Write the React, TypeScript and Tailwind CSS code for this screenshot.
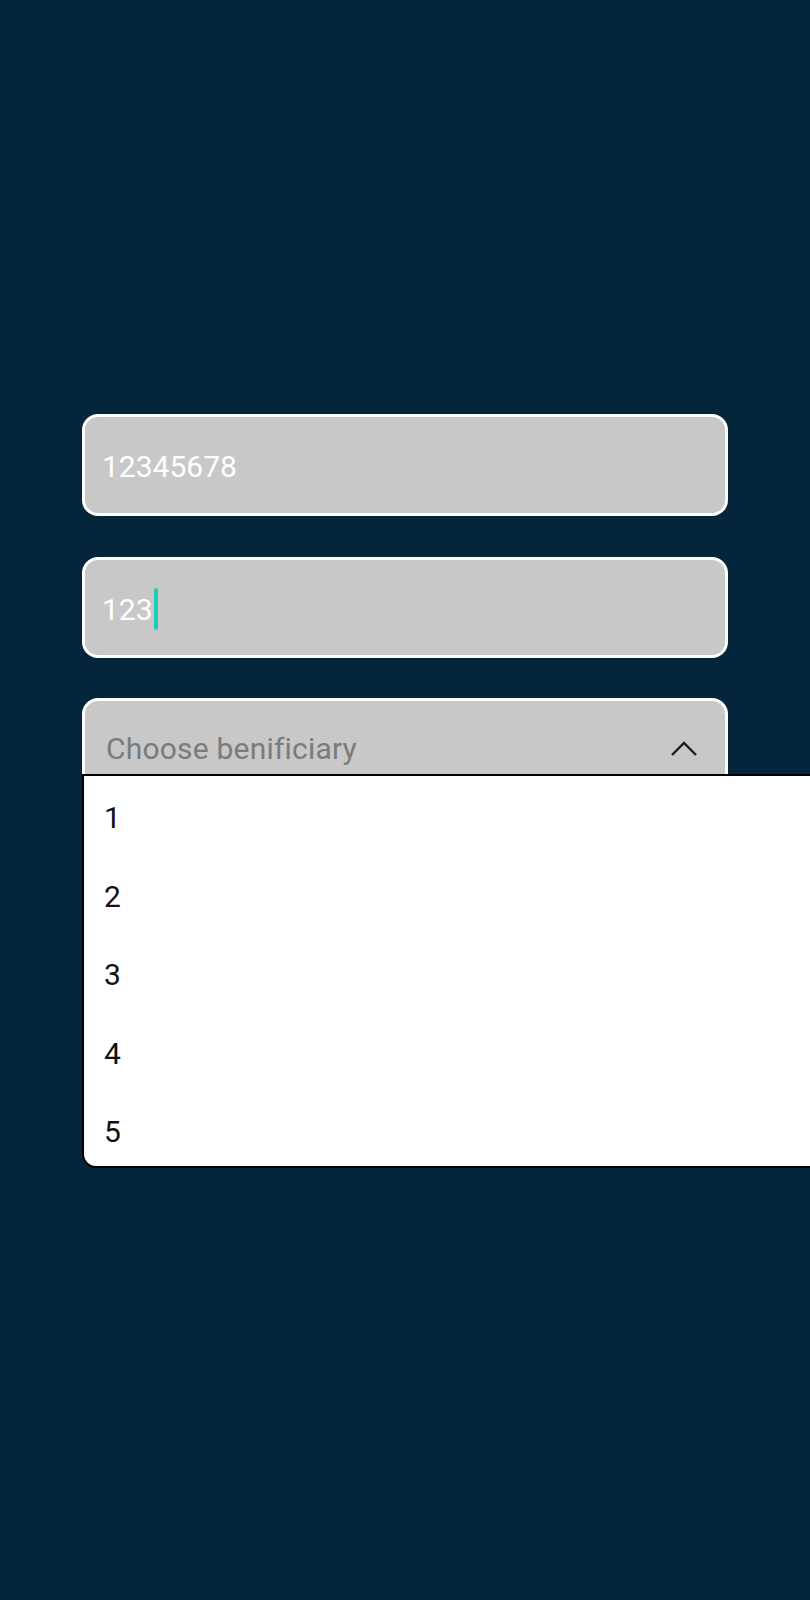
import React from "react";

const font = { fontFamily: "Roboto, 'Noto Sans', sans-serif" };

export default function App() {
  return (
    <div
      className="w-[810px] h-[1600px] bg-[#05263a] overflow-hidden"
      style={font}
    >
      <div className="pt-[414px] pl-[82px] w-[728px] flex flex-col gap-[41px]">
        <div className="h-[102px] rounded-[16px] border-[3px] border-white bg-[#c8c8c8] flex items-center pl-[17px]">
          <span className="text-[30px] text-white leading-none mt-[4px]">12345678</span>
        </div>
        <div className="h-[101px] rounded-[16px] border-[3px] border-white bg-[#c8c8c8] flex items-center pl-[17px]">
          <span className="text-[30px] text-white leading-none mt-[4px]">123</span>
          <span className="w-[4px] h-[42px] bg-[#1ccdb6] ml-[1px] mt-[3px] rounded-[2px]" />
        </div>
        <div className="relative">
          <div className="h-[102px] rounded-[16px] border-[3px] border-white bg-[#c8c8c8] flex items-center justify-between pl-[21px] pr-[27px] -mt-px">
            <span className="text-[30px] tracking-[0.2px] text-[#7b7b7b] leading-none">
              Choose benificiary
            </span>
            <svg width="28" height="16" viewBox="0 0 28 16" className="-mt-[1px]">
              <polyline
                points="2,14 14,2 26,14"
                fill="none"
                stroke="#1c1c1c"
                strokeWidth="2.4"
              />
            </svg>
          </div>
          <div className="absolute top-[75px] left-0 w-[780px] h-[394px] bg-white border-2 border-black rounded-bl-[14px] pt-[1px]">
            {["1", "2", "3", "4", "5"].map((n) => (
              <div
                key={n}
                className="h-[78.5px] flex items-center pl-[20px] text-[30px] text-[#111] leading-none pt-[4px]"
              >
                {n}
              </div>
            ))}
          </div>
        </div>
      </div>
    </div>
  );
}
